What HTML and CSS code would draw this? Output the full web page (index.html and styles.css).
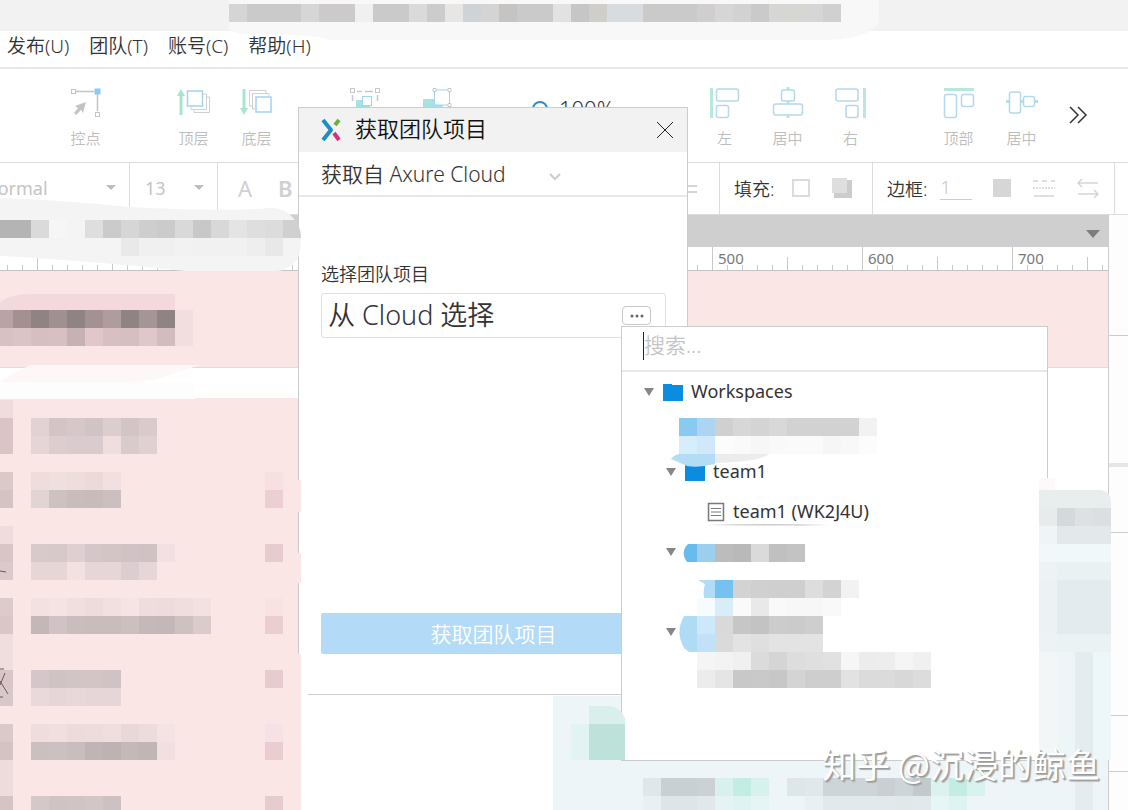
FILE: index.html
```html
<!DOCTYPE html>
<html lang="zh-CN">
<head>
  <meta charset="UTF-8">
  <title>获取团队项目</title>
  <link rel="stylesheet" href="styles.css">
</head>
<body>

  <header class="titlebar"></header>

  <nav class="menu">
    <a href="#">发布(U)</a>
    <a href="#">团队(T)</a>
    <a href="#">账号(C)</a>
    <a href="#">帮助(H)</a>
  </nav>

  <div class="toolbar">
    <div class="group">
      <button class="tool">
        <svg width="32" height="32" fill="none" stroke="#c4c4c4"><path d="M6 4.500H24M27.500 7V24" stroke-width="1.500"/><rect x="1.500" y="2.500" width="4" height="4"/><rect x="25.500" y="25.500" width="4" height="4"/><rect x="25" y="2" width="5" height="5" fill="#8dc8f0" stroke="#8dc8f0"/><path d="M16 15L5 19l3 2-4 5 2 2 5-5 2 3z" fill="#c4c4c4" stroke="none"/></svg>
        <span>控点</span>
      </button>
    </div>
    <div class="group">
      <button class="tool">
        <svg width="34" height="32" fill="none" stroke="#d0d0d0"><path d="M4 28V7" stroke="#a6e6cf" stroke-width="3"/><path d="M0 9L4 2l4 7z" fill="#a6e6cf" stroke="none"/><path d="M29 10h3.500v15.500H17V22M26 7h3.500v15.500H14V19"/><rect x="10.500" y="4" width="15" height="15" stroke="#a5d2f0" stroke-width="1.500" fill="#fff"/></svg>
        <span>顶层</span>
      </button>
      <button class="tool">
        <svg width="34" height="32" fill="none" stroke="#d0d0d0"><path d="M4 2v20" stroke="#a6e6cf" stroke-width="3"/><path d="M0 21l4 7 4-7z" fill="#a6e6cf" stroke="none"/><path d="M12 19h-2.500V3.500H26V6M15 22h-2.500V6.500H29V9"/><rect x="16" y="10" width="15" height="15" stroke="#a5d2f0" stroke-width="1.500" fill="#fff"/></svg>
        <span>底层</span>
      </button>
    </div>
    <div class="group spread">
      <button class="tool" aria-label="组合">
        <svg width="32" height="32" fill="none" stroke="#c8c8c8"><path d="M8 4.500h5M16 4.500h8M3.500 8v6M28.500 8v6" stroke-width="1.500"/><rect x="1.500" y="1.500" width="4" height="4"/><rect x="26.500" y="1.500" width="4" height="4"/><path d="M7 13h7v5h7v8H7z" fill="#a8e2e0" stroke="none"/><rect x="13.500" y="9.500" width="9" height="9" stroke="#a5d2f0" fill="#fff"/></svg>
      </button>
      <button class="tool" aria-label="取消组合">
        <svg width="32" height="32" fill="none" stroke="#c8c8c8"><path d="M2 12h12v6h8v9H2z" fill="#a8e2e0" stroke="none"/><rect x="13.500" y="3" width="15" height="15" stroke="#a5d2f0" fill="#fff"/><path d="M12 1.500h3v3h-3zM27 1.500h3v3h-3zM27 16.500h3v3h-3z" fill="#fff"/></svg>
      </button>
    </div>
    <div class="zoom">
      <svg width="18" height="22" fill="none" stroke="#2a8fd0" stroke-width="2"><circle cx="9" cy="9" r="7"/><path d="M13 14l4 6"/></svg>
      <span>100%</span>
    </div>
    <div class="group">
      <button class="tool">
        <svg width="32" height="32" fill="none" stroke="#b4d9ea" stroke-width="1.500"><path d="M2.500 1v30" stroke="#b8e8dc" stroke-width="3"/><rect x="7.500" y="2" width="22" height="12" rx="2"/><rect x="7.500" y="18.500" width="12" height="12" rx="2"/></svg>
        <span>左</span>
      </button>
      <button class="tool">
        <svg width="32" height="32" fill="none" stroke="#b4d9ea" stroke-width="1.500"><path d="M16 0v31" stroke="#b8e8dc" stroke-width="3"/><rect x="9.500" y="3" width="13" height="11" rx="2" fill="#fff"/><rect x="1.500" y="17" width="29" height="11" rx="2" fill="#fff"/></svg>
        <span>居中</span>
      </button>
      <button class="tool">
        <svg width="32" height="32" fill="none" stroke="#b4d9ea" stroke-width="1.500"><path d="M29.500 1v30" stroke="#b8e8dc" stroke-width="3"/><rect x="1" y="2" width="22" height="12" rx="2"/><rect x="11" y="18.500" width="12" height="12" rx="2"/></svg>
        <span>右</span>
      </button>
    </div>
    <div class="group">
      <button class="tool">
        <svg width="32" height="32" fill="none" stroke="#b4d9ea" stroke-width="1.500"><path d="M1 2.500h30" stroke="#b8e8dc" stroke-width="3"/><rect x="1.500" y="7.500" width="12" height="23" rx="2"/><rect x="18.500" y="7.500" width="12" height="12" rx="2"/></svg>
        <span>顶部</span>
      </button>
      <button class="tool">
        <svg width="32" height="32" fill="none" stroke="#b4d9ea" stroke-width="1.500"><path d="M0 14.500h32" stroke="#b8dfe4" stroke-width="3"/><rect x="3.500" y="5" width="11" height="21" rx="2" fill="#fff"/><rect x="17.500" y="9.500" width="11" height="10" rx="2" fill="#fff"/></svg>
        <span>居中</span>
      </button>
    </div>
    <button class="more" aria-label="更多">
      <svg width="20" height="18" fill="none" stroke="#333" stroke-width="1.500"><path d="M2 1l8 8-8 8M10 1l8 8-8 8"/></svg>
    </button>
  </div>

  <div class="format">
    <label class="cell style">
      <select aria-label="字重"><option>Normal</option></select>
      <svg width="10" height="5"><path d="M0 0h10L5 5z" fill="#bdbdbd"/></svg>
    </label>
    <label class="cell size">
      <select aria-label="字号"><option>13</option></select>
      <svg width="10" height="5"><path d="M0 0h10L5 5z" fill="#bdbdbd"/></svg>
    </label>
    <div class="cell font">
      <button class="letter" aria-label="颜色">A</button>
      <button class="letter bold" aria-label="粗体">B</button>
      <svg class="lines" width="12" height="12"><path d="M0 4h10M0 10h10" stroke="#d4d4d4" stroke-width="2"/></svg>
    </div>
    <div class="cell fill">
      <span>填充:</span>
      <svg width="18" height="20"><rect x="1" y="2" width="16" height="16" fill="none" stroke="#dcdcdc" stroke-width="2"/></svg>
      <svg width="20" height="20"><path d="M2 2h18v18H2z" fill="#ccc"/><path d="M0 0h15v15H0z" fill="#dedede"/></svg>
    </div>
    <div class="cell border">
      <label for="thick">边框:</label>
      <input id="thick" type="text" value="1">
      <svg width="18" height="18"><path d="M0 0h18v18H0z" fill="#d6d6d6"/></svg>
      <svg width="24" height="20" fill="none" stroke="#d4d4d4" stroke-width="1.500"><path d="M1 3h22" stroke-dasharray="5 4"/><path d="M1 10h22" stroke-dasharray="2 1"/><path d="M2 18h20"/></svg>
      <svg width="22" height="20" fill="none" stroke="#d6d6d6" stroke-width="1.500"><path d="M21 5H1M5 1L1 5l4 4M1 16h20M17 12l4 4-4 4"/></svg>
    </div>
  </div>

  <main class="work">
    <section class="stage">
      <div class="tabs">
        <svg width="14" height="8"><path d="M0 0h14L7 8z" fill="#7d7d7d"/></svg>
      </div>
      <svg class="ruler" width="100%" height="24">
        <defs>
          <pattern id="ticks" x="112" width="150" height="24" patternUnits="userSpaceOnUse">
            <path d="M.5 0v24M75.500 10v14M15.500 18v6M30.500 18v6M45.500 18v6M60.500 18v6M90.500 18v6M105.500 18v6M120.500 18v6M135.500 18v6" stroke="#c9c9c9"/>
          </pattern>
        </defs>
        <rect width="100%" height="24" fill="url(#ticks)"/>
        <text x="718" y="17">500</text>
        <text x="868" y="17">600</text>
        <text x="1018" y="17">700</text>
      </svg>
      <div class="band"></div>
      <div class="list"></div>
    </section>
    <aside class="side">
      <div></div>
      <div></div>
      <div></div>
      <div></div>
      <div></div>
    </aside>
  </main>

  <div class="dialog" role="dialog" aria-labelledby="dialog-title">
    <div class="dialog-head">
      <svg width="20" height="24" fill="none" stroke-width="4"><path d="M2 2l8 10-8 10" stroke="#1c8fc8" stroke-linejoin="round"/><path d="M18 2l-4 5" stroke="#6fae3e"/><path d="M13 15l5 7" stroke="#d6317e"/></svg>
      <h1 id="dialog-title">获取团队项目</h1>
      <button class="close" aria-label="关闭">
        <svg width="18" height="18" stroke="#222"><path d="M1 1l16 16M17 1L1 17"/></svg>
      </button>
    </div>
    <label class="source">
      <select aria-label="来源"><option>获取自 Axure Cloud</option></select>
      <svg width="14" height="8" fill="none" stroke="#ccc" stroke-width="2"><path d="M2 1l5 5 5-5"/></svg>
    </label>
    <div class="dialog-body">
      <label for="project">选择团队项目</label>
      <div class="field">
        <input id="project" type="text" value="从 Cloud 选择">
        <button class="dots" aria-label="浏览">
          <svg width="14" height="4" fill="#666"><circle cx="2" cy="2" r="1.500"/><circle cx="7" cy="2" r="1.500"/><circle cx="12" cy="2" r="1.500"/></svg>
        </button>
      </div>
      <button class="submit">获取团队项目</button>
    </div>
  </div>

  <svg class="mosaic" id="mosaic" aria-hidden="true">
    <path d="M229 0h650v22q-10 18-60 18H330q-15-6-80-6-21 0-21-8z" fill="#f8f8f8"/>
    <path d="M0 198Q60 200 130 207q90 5 140 1 20 0 28 18 6 14 0 32-8 12-20 13H185Q80 260 0 256z" fill="#f4f4f4"/>
    <path d="M283 220h12q6 8 6 18h-18z" fill="#d0d0d0"/>
    <path d="M0 302q12-8 30-8h145v16H0z" fill="#f3d9dc"/>
    <path d="M0 382q15-10 30-17h170q-20 6-38 13-15 4-35 4z" fill="#fdf8f7"/>
    <path d="M0 382h195v17H0z" fill="#fefdfd"/>
    <path d="M297 480h4v32h-4zM297 553h4v30h-4zM297 654h4v156h-4z" fill="#fae6e5"/>
    <path d="M301 693h7v3h-7z" fill="#fff"/>
    <path d="M553 696h69v64h486v50H553z" fill="#edf5f8"/>
  </svg>

  <div class="popup">
    <div class="search">
      <input type="text" placeholder="搜索..." aria-label="搜索">
    </div>
    <ul class="tree">
      <li>
        <svg width="10" height="8"><path d="M0 0h10L5 8z" fill="#868686"/></svg>
        <svg width="20" height="17"><path d="M0 0h9v1h11v16H0z" fill="#0a8de0"/></svg>
        <span>Workspaces</span>
      </li>
      <li></li>
      <li class="deep">
        <svg width="10" height="8"><path d="M0 0h10L5 8z" fill="#868686"/></svg>
        <svg width="20" height="17"><path d="M0 1h9v1h11v15H0z" fill="#0a8de0"/></svg>
        <span>team1</span>
      </li>
      <li class="leaf">
        <svg width="18" height="20" fill="none" stroke="#7a7a7a"><path d="M1.500 1.500h15v17h-15z" stroke-width="1.500"/><path d="M4 6.500h10M4 10h10M4 13.500h10"/></svg>
        <span>team1 (WK2J4U)</span>
      </li>
      <li class="deep">
        <svg width="10" height="8"><path d="M0 0h10L5 8z" fill="#868686"/></svg>
      </li>
      <li></li>
      <li class="deep">
        <svg width="10" height="8"><path d="M0 0h10L5 8z" fill="#868686"/></svg>
      </li>
    </ul>
  </div>

  <svg class="mosaic" id="mosaic-over" aria-hidden="true">
    <path d="M679 454h36v10q-16 4-28 2l-16-7q3-4 8-5z" fill="#b4dcf5"/>
    <path d="M715 454h54q-10 8-54 9z" fill="#ececec"/>
    <path d="M706 525q60-2 124 0-50 1-124 0z" fill="#ccc"/>
    <path d="M697 544h-9q-8 8-1 18h10z" fill="#68bcec"/>
    <path d="M698 580h17v18h-11q-1-8 1-14z" fill="#b0dcf6"/>
    <path d="M697 616h-13q-9 16 0 32l5 4h8z" fill="#b0dbf5"/>
    <path d="M1039 490h62q10 2 10 12v6h-72z" fill="#e8edee"/>
    <path d="M1039 478h16v12h-16z" fill="#fdf8f9"/>
    <path d="M589 706h20q10 0 16 12v6h-36z" fill="#d9efec"/>
    <path d="M571 724h18v36h-18z" fill="#e2f3f3"/>
    <path d="M589 724h36v36h-36z" fill="#bde2da"/>
    <path d="M0 571l6 1M0 669h4M5 673L0 685M0 681l8 13M0 697h3" stroke="#6b5a5c" fill="none"/>
  </svg>

  <div class="watermark">知乎 @沉浸的鲸鱼</div>

  <script>
    // each run: column, row, then one colour per 18px cell ("-" leaves a gap)
    const under = [
      [13, 0, "d5d5d5 cacaca cacaca cacaca d6d6d6 cccacb cccacb f0f0f0 cacaca cacaca dadada cccccc e8e6e5 cfd3d5 d4d4d4 c6c4c2 cacaca cacaca e2e2e2 c6c6c6 d0cecb d8dcde d8dcde cacaca cacaca cacaca d0cecf d6d6d6 d2d2d2 cacaca d6d6d5 d6d6d2 d6d6d6 d0d0d0"],
      [0, 12, "b4b4b4 b4b4b4 dadada f6f6f6 f4f4f4 dedede cbcbcb d6d6d6 cecece cbcbcb d9d9d9 c8c8c8 d8d8d8 e4e4e4 dedede dcdcdc"],
      [7, 13, "e9e9e9 f0f0f0 f0f0f0 f2f2f2 f1f1f1 f1f1f1 f1f1f1 eeeeee e8e8e8"],
      [0, 17, "b8a4a6 a39192 8f8384 a09092 8f8384 a39194 ae9c9f 8f8384 a59596 8f8384 f2dede"],
      [0, 18, "d9c1c3 dcc4c6 d6bfc1 d8bfc1 c6b2b5 dfc7ca d8bfc1 d6bfc1 dfc7ca d1bcbf f2dede"],
      [0, 22, "f0dcdc"],
      [0, 23, "dac4c5 - e2d2d3 d4c4c5 d6c8c9 d2c3c5 dccdce d3c4c6 dbcacc"],
      [0, 24, "dac4c5 - e5d5d6 ddcdcf daccce daccce f0dede d9cacc dfd0d1"],
      [0, 26, "dbc9ca - efdddd f0dfdf efdddd ecdadb f2e0e1 - - - - - - - - f6e0e1"],
      [0, 27, "d5c2c4 - e2d3d4 cdc1c2 c8bcbd c7bbbc cbbfc0 - - - - - - - - ebcfd2"],
      [0, 29, "f0dcdd"],
      [0, 30, "d9c4c6 - d8cacb d7c9ca dfcfd0 d5c7c9 d3c5c6 d1c3c5 d0c2c3 f3e0e2 - - - - - e7cccf"],
      [0, 31, "dcc9cb - e6d6d6 e6d6d6 f3e1e2 e6d6d8 e6d6d8 dccdd0 e6d6d8"],
      [0, 33, "ddcacb - f3e0e1 f5e2e3 f1dede eedcdd f2e0e1 f6e4e4 eedcde eddbdd f0dedf f3e0e1 - - - f8e2e2"],
      [0, 34, "dac6c7 - c3b7b9 d1c3c5 c9bdbe c8bcbd c8bcbd cbbfc0 c4b8ba c3b7b9 cdc1c2 dccbcd - - - ebcfd0"],
      [0, 35, "f0dddd"],
      [0, 36, "f0dddd"],
      [0, 37, "d9c5c7 - d5c7c9 cfc3c4 d2c5c6 d3c5c6 d0c3c5 - - - - - - - - e6cbcf"],
      [0, 38, "d9c8c9 - e9d9da e6d6d8 e8d8da e6d6d8 e6d6d8"],
      [0, 40, "dbc8c9 - efddde f1dfe0 eddbdc eedcdd efdddf e9d8da eddcde f5e3e4 - - - - - f6e2e4"],
      [0, 41, "d5c3c4 - cbc0c1 ccc1c2 c9bebf c0b4b6 beb2b4 c4b8b9 c1b5b7 f1dfe2 - - - - - e9cdd0"],
      [0, 42, "eedcdd"],
      [0, 43, "eedcdd"],
      [0, 44, "d6c3c4 - d5c8c9 cfc3c4 d1c4c5 d3c6c7 cdc1c3 - - - - - - - - e6cbcf"],
      [36, 43, "dfe7ea c9d0d3 c9d0d3 cbd1d4 d9f1ee c3ece3 d7f2ed - dde6e9 e0e8eb cdd5d8 cdd5d8 cdd5d8 c9cfd2 cdd5d8 c3cacd dcf2ee c3ece3 d8f3ee"],
      [36, 44, "e8f0f3 dde5e8 dde5e8 e0e8eb e5f3f5 def4f2 e5f5f5 - - e8f0f3 e2e9ec e2e9ec e2e9ec e2e9ec e0e8ea e2e9ec e6f5f5 def4f2"]
    ];

    const over = [
      [38, 23, "8acaf0 abd5f2 d0d0d0 d7d7d7 d4d4d4 d8d8d8 d2d2d2 d2d2d2 d2d2d2 d2d2d2 f2f2f2"],
      [38, 24, "d6eefb cfe9fa fcfcfc fafafa f7f7f7 f9f9f9 fafafa fafafa f6f6f6 f8f8f8 fcfcfc"],
      [39, 30, "9ccfee bcbcbc b9b9b9 dadada c0c0c0 c3c3c3"],
      [40, 32, "75c1ef d3d3d3 d0d0d0 cfcfcf cfcfcf dddddd d3d3d3 f2f2f2"],
      [39, 33, "f6fbfe d8ecfa fafafa e9e9e9 f9f9f9 f7f7f7 f7f7f7 f9f9f9"],
      [39, 34, "cde8f8 d9d9d9 c6c6c6 c3c3c3 cccccc cbcbcb cecece"],
      [39, 35, "c3e1f6 dadada e3e3e3 dfdfdf e3e3e3 e3e3e3 e3e3e3"],
      [39, 36, "f5f5f5 f3f3f3 f0f0f0 dbdbdb d5d5d5 dddddd dfdfdf e1e1e1 f6f6f6 ececec ededed f5f5f5 f0f0f0"],
      [39, 37, "ececec e5e5e5 c8c8c8 c9c9c9 c7c7c7 d4d4d4 cecece cecece e2e2e2 dbdbdb dbdbdb d8d8d8 dcdcdc"],
      [58, 28, "e8ebec d4d9dc dde1e4 dcdfe1"],
      [58, 29, "eff4f6 e3e8ea e3e8ea e3e8ea"],
      [58, 30, "f1f8fa f1f8fa f1f8fa f1f8fa"],
      [58, 31, "edf3f5 eaf1f3 eaf1f3 eaf1f3"],
      [58, 32, "ecf2f4 e4ebee e4ebee e4ebee"],
      [58, 33, "ecf2f4 e4ebee e4ebee e4ebee"],
      [58, 34, "ecf2f4 e4ebee e4ebee e4ebee"],
      [58, 35, "edf3f5 eaf2f4 eaf2f4 eaf2f4"]
    ];
    for (let row = 36; row < 42; row++) {
      over.push([58, row, "f2f6f7 edf5f9 e4ecef edf6f9"]);
    }
    for (let row = 42; row < 45; row++) {
      over.push([60, row, "e4ecef"]);
    }

    function drawMosaic(id, runs) {
      const svg = document.getElementById(id);
      runs.forEach(([col, row, colors]) => {
        colors.split(" ").forEach((color, i) => {
          if (color === "-") return;
          const rect = document.createElementNS("http://www.w3.org/2000/svg", "rect");
          rect.setAttribute("x", (col + i) * 18 - 5);
          rect.setAttribute("y", row * 18 + 4);
          rect.setAttribute("width", 18);
          rect.setAttribute("height", 18);
          rect.setAttribute("fill", "#" + color);
          svg.appendChild(rect);
        });
      });
    }

    drawMosaic("mosaic", under);
    drawMosaic("mosaic-over", over);
  </script>

</body>
</html>
```
FILE: styles.css
```css
* {
  box-sizing: border-box;
}

body {
  margin: 0;
  position: relative;
  display: flex;
  flex-direction: column;
  min-height: 100vh;
  overflow: hidden;
  background: #fff;
  color: #333;
  font-family: "Noto Sans", "Noto Sans CJK SC", sans-serif;
  font-size: 18px;
  font-weight: 350;
}

button, input, select {
  margin: 0;
  padding: 0;
  border: 0;
  background: none;
  color: inherit;
  font: inherit;
  appearance: none;
  outline: 0;
}

svg {
  display: block;
  flex: none;
}

.titlebar {
  height: 31px;
  background: #f2f2f2;
}

.menu {
  display: flex;
  gap: 20px;
  height: 38px;
  padding: 0 7px;
  border-bottom: 2px solid #e8e8e8;
  font-size: 19px;
  line-height: 30px;
}

.menu a {
  color: #333;
  text-decoration: none;
}

.toolbar {
  display: flex;
  gap: 45px;
  height: 94px;
  padding: 18px 0 0 54px;
  border-bottom: 1px solid #dcdcdc;
}

.group {
  display: flex;
}

.spread {
  gap: 9px;
}

.tool {
  display: flex;
  flex-direction: column;
  align-items: center;
  gap: 7px;
  width: 63px;
  color: #bdbdbd;
  font-size: 15px;
  line-height: 24px;
  white-space: nowrap;
}

.zoom {
  display: flex;
  gap: 10px;
  flex: none;
  width: 120px;
  padding-top: 13px;
  margin: 0 -3px 0 18px;
  font-size: 22px;
  line-height: 16px;
}

.more {
  display: flex;
  padding-top: 19px;
  margin-left: -30px;
}

.format {
  display: flex;
  height: 52px;
  border-bottom: 1px solid #dcdcdc;
}

.cell {
  display: flex;
  align-items: center;
  padding-bottom: 2px;
  border-right: 1px solid #dcdcdc;
}

.style, .size {
  color: #c4c4c4;
  font-weight: 400;
  justify-content: space-between;
  padding-right: 13px;
}

.style {
  width: 146px;
  margin-left: -16px;
}

.size {
  width: 86px;
  padding-left: 13px;
}

.style + .size {
  margin-left: 2px;
}

.font {
  width: 502px;
  padding-left: 20px;
  gap: 26px;
  color: #d0d0d0;
}

.letter {
  font-size: 22px;
  font-weight: 400;
}

.bold {
  font-weight: 600;
}

.lines {
  margin-left: auto;
  margin-right: 20px;
}

.fill {
  gap: 22px;
  width: 153px;
  padding-left: 14px;
}

.fill span {
  margin-right: -4px;
}

.border {
  gap: 21px;
  width: 242px;
  padding-left: 14px;
}

.border label {
  margin-right: -8px;
}

.border input {
  width: 32px;
  border-bottom: 1px solid #ccc;
  color: #c4c4c4;
}

.work {
  display: flex;
  flex: 1;
}

.stage {
  flex: 1;
  border-right: 1px solid #ccc;
}

.tabs {
  display: flex;
  justify-content: flex-end;
  align-items: center;
  height: 32px;
  padding: 5px 8px 0 0;
  background: #cfcfcf;
}

.ruler {
  border-bottom: 1px solid #c4c4c4;
  fill: #777;
  font-size: 15px;
  font-weight: 400;
}

.band {
  height: 97px;
  border-bottom: 1px solid #efd6d6;
  background: #fae6e5;
}

.list {
  width: 301px;
  height: 412px;
  margin-top: 30px;
  background: #fae6e5;
}

.side {
  width: 19px;
  background: #fdfdfd;
}

.side div {
  height: 56px;
  border-bottom: 1px solid #ccc;
}

.side div:nth-child(1) {
  height: 121px;
}

.side div:nth-child(2) {
  height: 131px;
  border-bottom: 4px solid #e5e5e5;
}

.side div:nth-child(3) {
  height: 66px;
}

.side div:nth-child(4) {
  height: 183px;
}

.dialog {
  position: absolute;
  top: 107px;
  left: 298px;
  width: 390px;
  border: 1px solid #ccc;
  background: #fff;
}

.dialog-head {
  display: flex;
  align-items: center;
  gap: 14px;
  height: 44px;
  padding: 0 13px 0 22px;
  background: #f2f2f2;
}

.dialog-head h1 {
  flex: 1;
  margin: 0;
  padding-bottom: 4px;
  color: #111;
  font-size: 22px;
  font-weight: 350;
  line-height: 40px;
}

.close {
  display: flex;
}

.source {
  display: flex;
  align-items: center;
  gap: 42px;
  height: 45px;
  padding-left: 22px;
  border-bottom: 2px solid #e8e8e8;
  font-size: 21px;
}

.source svg {
  margin-top: 6px;
}

.dialog-body {
  display: flex;
  flex-direction: column;
  padding: 64px 21px 40px 22px;
}

.dialog-body label {
  line-height: 26px;
}

.field {
  display: flex;
  align-items: center;
  height: 45px;
  margin-top: 6px;
  padding: 0 14px 0 6px;
  border: 1px solid #e0e0e0;
  border-radius: 3px;
}

.field input {
  flex: 1;
  min-width: 0;
  padding-bottom: 4px;
  font-size: 27px;
}

.dots {
  display: flex;
  align-items: center;
  justify-content: center;
  width: 29px;
  height: 19px;
  border: 1px solid #c8c8c8;
  border-radius: 4px;
}

.submit {
  height: 41px;
  margin-top: 275px;
  padding-bottom: 2px;
  border-radius: 2px;
  background: #b3dbf7;
  color: #fff;
  font-size: 21px;
}

.mosaic {
  position: absolute;
  top: 0;
  left: 0;
  width: 100%;
  height: 100%;
  pointer-events: none;
}

.popup {
  position: absolute;
  top: 326px;
  left: 621px;
  width: 427px;
  height: 435px;
  border: 1px solid #ccc;
  background: #fff;
}

.search {
  height: 45px;
  padding: 5px 20px 0 21px;
  border-bottom: 2px solid #e8e8e8;
}

.search input {
  display: block;
  width: 100%;
  height: 28px;
  padding-bottom: 2px;
  border-left: 1px solid #222;
  font-size: 21px;
}

.search input::placeholder {
  color: #c4c4c4;
}

.tree {
  margin: 0;
  padding: 0 0 0 22px;
  list-style: none;
  font-weight: 400;
}

.tree li {
  display: flex;
  align-items: center;
  gap: 8px;
  height: 40px;
}

.tree span {
  padding-bottom: 2px;
}

.tree li svg + svg {
  margin-left: 1px;
}

.tree .deep {
  padding-left: 22px;
}

.tree .leaf {
  padding-left: 63px;
}

.watermark {
  position: absolute;
  right: 28px;
  bottom: 22px;
  color: #fff;
  font-family: "Noto Sans CJK SC", sans-serif;
  font-size: 34px;
  font-weight: 400;
  line-height: 48px;
  text-shadow: 1px 1px 1px #999, 2px 2px 1px #aaa;
}
```
